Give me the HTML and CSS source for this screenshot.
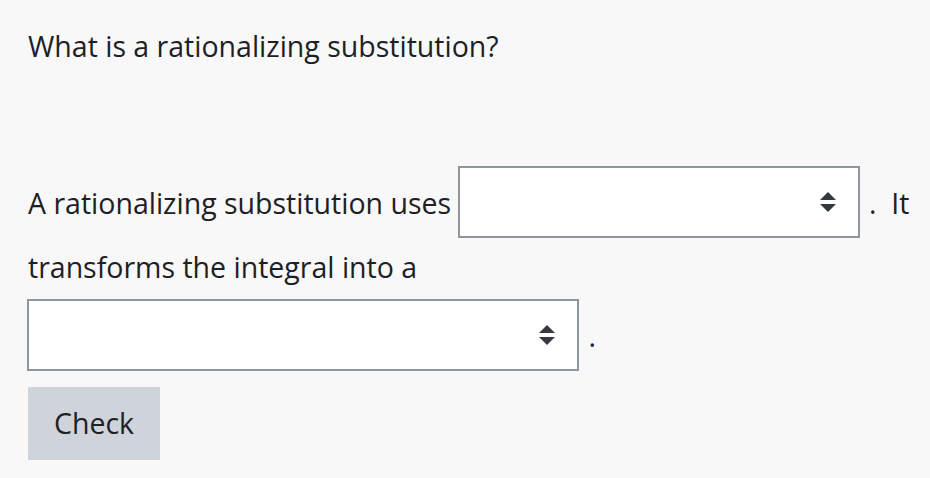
FILE: index.html
```html
<!DOCTYPE html>
<html lang="en">
<head>
<meta charset="utf-8">
<title>Rationalizing substitution</title>
<link rel="stylesheet" href="styles.css">
</head>
<body>
<div class="que">
  <p class="qtext">What is a rationalizing substitution?</p>
  <div class="ablock">A rationalizing substitution uses <span class="select-wrap select-wide"><select class="custom-select" aria-label="Blank 1"><option value=""></option></select><svg class="arrow" viewBox="0 0 4 5" width="16" height="20" aria-hidden="true"><path d="M2 0L0 2h4zm0 5L0 3h4z"/></svg></span> .&nbsp; It transforms the integral into a <span class="select-wrap select-wider"><select class="custom-select" aria-label="Blank 2"><option value=""></option></select><svg class="arrow" viewBox="0 0 4 5" width="16" height="20" aria-hidden="true"><path d="M2 0L0 2h4zm0 5L0 3h4z"/></svg></span> .</div>
  <button class="btn-check" type="button">Check</button>
</div>
</body>
</html>
```

FILE: styles.css
```css
html, body {
  margin: 0;
  padding: 0;
  background: #f8f8f8;
}

body {
  font-family: "Open Sans", "Noto Sans", "Liberation Sans", sans-serif;
  font-size: 28.5px;
  line-height: 43px;
  color: #1d2125;
}

.que {
  padding: 25px 10px 0 28px;
}

.qtext {
  margin: 0 0 88px 0;
}

.ablock {
  margin: 0;
}

.select-wrap {
  position: relative;
  display: inline-block;
  overflow: hidden;
  vertical-align: -32.5px;
  margin: 10px 2px 8px -1px;
}

.select-wide {
  width: 402px;
}

.select-wider {
  width: 552px;
}

.custom-select {
  display: block;
  box-sizing: border-box;
  width: 100%;
  height: 72px;
  margin: 0;
  padding: 0 60px 0 22px;
  border: 2px solid #8f959e;
  border-radius: 0;
  background: #ffffff;
  font: inherit;
  color: #495057;
  appearance: none;
  -webkit-appearance: none;
}

.arrow {
  position: absolute;
  right: 24px;
  top: 26px;
  fill: #343a40;
  pointer-events: none;
}

.btn-check {
  display: block;
  margin: 8px 0 0 0;
  padding: 15px 26px;
  border: none;
  border-radius: 0;
  background: #ced4da;
  color: #1d2125;
  font: inherit;
  line-height: 43px;
}
```
